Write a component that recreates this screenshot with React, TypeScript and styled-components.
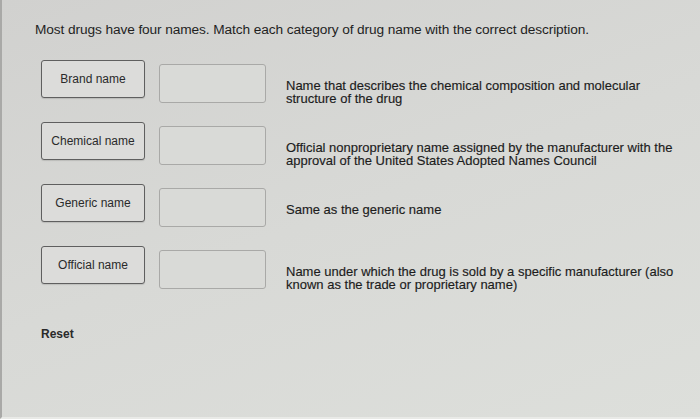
import React from "react";
import styled, { createGlobalStyle } from "styled-components";

const Global = createGlobalStyle`
  html, body { margin: 0; padding: 0; }
  body { font-family: "Liberation Sans", Arial, sans-serif; }
`;

const Page = styled.div`
  box-sizing: border-box;
  width: 700px;
  height: 419px;
  overflow: hidden;
  background: linear-gradient(160deg, #d1d1cf 0%, #d8d9d6 50%, #dddfdb 100%);
  border-left: 2px solid #a9a9a7;
  border-bottom: 2px solid #e9eae7;
  padding: 21px 0 0 33px;
  color: #1f1f1f;
`;

const Prompt = styled.p`
  margin: 0;
  font-size: 13.7px;
  line-height: 18px;
  letter-spacing: -0.1px;
`;

const Matches = styled.div`
  display: flex;
  flex-direction: column;
  gap: 19px;
  margin-top: 21px;
  padding-left: 6px;
`;

const Row = styled.div`
  display: grid;
  grid-template-columns: 104px 107px 1fr;
  grid-template-rows: 43px;
  column-gap: 14px;
  align-items: start;
`;

const NameChip = styled.div`
  box-sizing: border-box;
  height: 38px;
  display: flex;
  align-items: center;
  justify-content: center;
  border: 1px solid #5f5f5f;
  border-radius: 3px;
  background: #dcdcda;
  font-size: 12px;
  color: #2a2a2a;
  box-shadow: 0 1px 1px rgba(0, 0, 0, 0.12);
`;

const DropZone = styled.div`
  box-sizing: border-box;
  height: 39px;
  margin-top: 4px;
  border: 1px solid #a9a9a7;
  border-radius: 3px;
  background: #d9dad7;
`;

const Description = styled.div`
  margin-top: 19px;
  padding-left: 6px;
  max-width: 396px;
  font-size: 13px;
  line-height: 13px;
  color: #1c1c1c;
  -webkit-text-stroke: 0.15px #1c1c1c;
`;

const Reset = styled.button`
  margin: 38px 0 0 6px;
  padding: 0;
  border: none;
  background: none;
  font-family: "Liberation Sans", Arial, sans-serif;
  font-size: 12px;
  font-weight: bold;
  color: #2a2a2a;
  cursor: pointer;
`;

const rows = [
  {
    name: "Brand name",
    desc: "Name that describes the chemical composition and molecular structure of the drug",
  },
  {
    name: "Chemical name",
    desc: "Official nonproprietary name assigned by the manufacturer with the approval of the United States Adopted Names Council",
  },
  { name: "Generic name", desc: "Same as the generic name" },
  {
    name: "Official name",
    desc: "Name under which the drug is sold by a specific manufacturer (also known as the trade or proprietary name)",
  },
];

export default function App() {
  return (
    <Page>
      <Global />
      <Prompt>
        Most drugs have four names. Match each category of drug name with the correct description.
      </Prompt>
      <Matches>
        {rows.map((r) => (
          <Row key={r.name}>
            <NameChip>{r.name}</NameChip>
            <DropZone />
            <Description>{r.desc}</Description>
          </Row>
        ))}
      </Matches>
      <Reset type="button">Reset</Reset>
    </Page>
  );
}
